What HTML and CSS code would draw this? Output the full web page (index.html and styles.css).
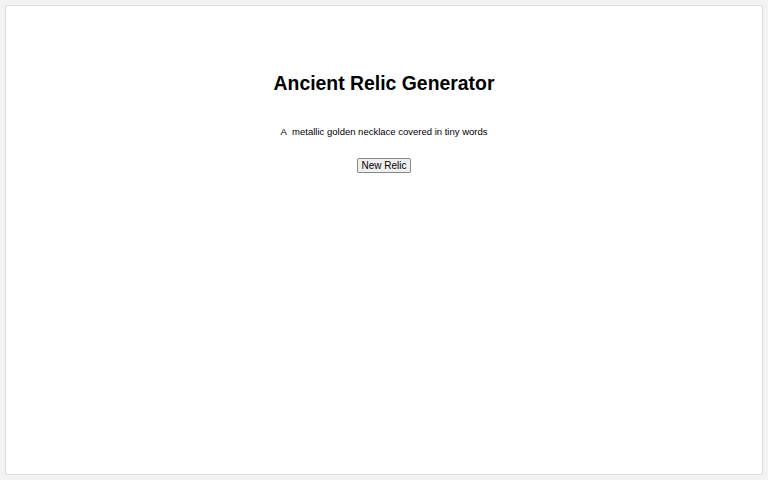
FILE: index.html
```html
<!DOCTYPE html>
<html>
<head>
<meta charset="utf-8">
<link rel="stylesheet" href="styles.css">
</head>
<body>
<div class="page">
  <h1 class="title">Ancient Relic Generator</h1>
  <p class="relic">A&nbsp; metallic golden necklace covered in tiny words</p>
  <button class="btn">New Relic</button>
</div>
</body>
</html>
```
FILE: styles.css
```css
html, body {
  margin: 0;
  padding: 0;
}
body {
  background: #f3f3f3;
  padding: 5px;
  font-family: "Liberation Sans", Arial, sans-serif;
}
.page {
  background: #fff;
  border: 1px solid #dcdcdc;
  height: 470px;
  box-sizing: border-box;
  display: flex;
  flex-direction: column;
  align-items: center;
  padding-top: 66px;
}
.title {
  margin: 0;
  font-size: 19.4px;
  line-height: 22px;
  font-weight: bold;
  color: #000;
}
.relic {
  margin: 32px 0 0 0;
  font-size: 9.5px;
  line-height: 11px;
  color: #000;
}
.btn {
  margin-top: 21px;
  font-family: "Liberation Sans", Arial, sans-serif;
  font-size: 10px;
  line-height: 11px;
  padding: 1px 3px;
  border: 1px solid #888;
  border-radius: 2px;
  background: #efefef;
  color: #000;
}
```
